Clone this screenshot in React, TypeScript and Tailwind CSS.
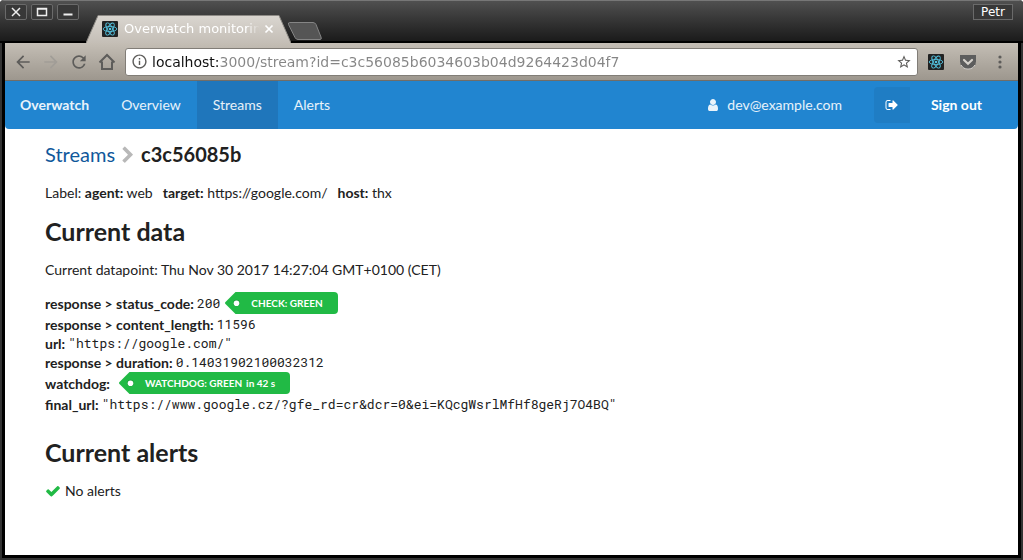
import React from "react"

const ICONS = {
  back: "M20 11H7.83l5.59-5.59L12 4l-8 8 8 8 1.41-1.41L7.83 13H20v-2z",
  forward: "M12 4l-1.41 1.41L16.17 11H4v2h12.17l-5.58 5.59L12 20l8-8z",
  reload:
    "M17.65 6.35A7.96 7.96 0 0 0 12 4c-4.42 0-8 3.58-8 8s3.58 8 8 8c3.73 0 6.84-2.55 7.73-6h-2.08A5.99 5.99 0 0 1 12 18c-3.31 0-6-2.69-6-6s2.69-6 6-6c1.66 0 3.14.69 4.22 1.78L13 11h7V4l-2.35 2.35z",
  info: "M11 17h2v-6h-2v6zm1-15C6.48 2 2 6.48 2 12s4.48 10 10 10 10-4.48 10-10S17.52 2 12 2zm0 18c-4.41 0-8-3.59-8-8s3.59-8 8-8 8 3.59 8 8-3.59 8-8 8zM11 9h2V7h-2v2z",
  star: "M22 9.24l-7.19-.62L12 2 9.19 8.63 2 9.24l5.46 4.73L5.82 21 12 17.27 18.18 21l-1.63-7.03L22 9.24zM12 15.4l-3.76 2.27 1-4.28-3.32-2.88 4.38-.38L12 6.1l1.71 4.04 4.38.38-3.32 2.88 1 4.28L12 15.4z",
}

const GLYPHS = {
  user: "M1536 1399q0 109-62.5 187t-150.5 78h-854q-88 0-150.5-78t-62.5-187q0-85 8.5-160.5t31.5-152 58.5-131 94-89 134.5-34.5q131 128 313 128t313-128q76 0 134.5 34.5t94 89 58.5 131 31.5 152 8.5 160.5zm-256-887q0 159-112.5 271.5t-271.5 112.5-271.5-112.5-112.5-271.5 112.5-271.5 271.5-112.5 271.5 112.5 112.5 271.5z",
  signOut:
    "M704 1440q0 4 1 20t.5 26.5-3 23.5-10 19.5-20.5 6.5h-320q-119 0-203.5-84.5t-84.5-203.5v-704q0-119 84.5-203.5t203.5-84.5h320q13 0 22.5 9.5t9.5 22.5q0 4 1 20t.5 26.5-3 23.5-10 19.5-20.5 6.5h-320q-66 0-113 47t-47 113v704q0 66 47 113t113 47h312l11.5 1 11.5 3 8 5.5 7 9 2 13.5zm928-544q0 26-19 45l-544 544q-19 19-45 19t-45-19-19-45v-288h-448q-26 0-45-19t-19-45v-384q0-26 19-45t45-19h448v-288q0-26 19-45t45-19 45 19l544 544q19 19 19 45z",
  check:
    "M1671 566q0 40-28 68l-724 724-136 136q-28 28-68 28t-68-28l-136-136-362-362q-28-28-28-68t28-68l136-136q28-28 68-28t68 28l294 295 656-657q28-28 68-28t68 28l136 136q28 28 28 68z",
  chevron:
    "M1363 1005l-742 742q-19 19-45 19t-45-19l-166-166q-19-19-19-45t19-45l531-531-531-531q-19-19-19-45t19-45l166-166q19-19 45-19t45 19l742 742q19 19 19 45t-19 45z",
}

const Icon = ({ name, className }: { name: keyof typeof ICONS; className: string }) => (
  <svg viewBox="0 0 24 24" className={className} fill="currentColor" aria-hidden="true">
    <path d={ICONS[name]} />
  </svg>
)

const Glyph = ({ name, className }: { name: keyof typeof GLYPHS; className: string }) => (
  <svg viewBox="0 0 1792 1792" className={className} fill="currentColor" aria-hidden="true">
    <path d={GLYPHS[name]} />
  </svg>
)

const ReactLogo = () => (
  <svg viewBox="0 0 16 16" className="size-4 shrink-0" aria-hidden="true">
    <rect width="16" height="16" rx="1" fill="#222" />
    <g fill="none" stroke="#53c1de" strokeWidth="0.9">
      <ellipse cx="8" cy="8" rx="6.8" ry="2.6" />
      <ellipse cx="8" cy="8" rx="6.8" ry="2.6" transform="rotate(60 8 8)" />
      <ellipse cx="8" cy="8" rx="6.8" ry="2.6" transform="rotate(120 8 8)" />
    </g>
    <circle cx="8" cy="8" r="1.3" fill="#53c1de" />
  </svg>
)

const WindowButton = ({ label, children }: { label: string; children: React.ReactNode }) => (
  <button
    aria-label={label}
    className="flex h-4 w-[22px] items-center justify-center rounded-xs border border-[#6a6a6a] bg-[#383838]"
  >
    <svg viewBox="0 0 12 12" className="size-3" fill="none" stroke="#eee" strokeWidth="1.5">
      {children}
    </svg>
  </button>
)

const TitleBar = () => (
  <div className="flex h-[43px] justify-between border-t border-b-2 border-t-[#777] border-b-black bg-linear-to-b from-[#505050] to-[#1b1b1b] pr-[10px] pl-[5px]">
    <div className="flex">
      <div className="mt-[3px] flex gap-1">
        <WindowButton label="Close">
          <path d="M2 2l8 8M10 2l-8 8" />
        </WindowButton>
        <WindowButton label="Maximize">
          <path d="M1.5 2.5h9v7h-9zM1.5 3h9" />
        </WindowButton>
        <WindowButton label="Minimize">
          <path d="M1.5 8.5h9" strokeWidth="2" />
        </WindowButton>
      </div>
      <div className="relative mt-[14px] ml-[7px] flex h-7 w-[205px] items-center pl-4">
        <svg viewBox="0 0 205 28" className="absolute inset-0 h-7 w-[205px]" aria-hidden="true">
          <defs>
            <linearGradient id="tab" x1="0" y1="0" x2="0" y2="1">
              <stop offset="0" stopColor="#dad6d0" />
              <stop offset="1" stopColor="#c4beb6" />
            </linearGradient>
          </defs>
          <path d="M0 28L12 0.5h181L205 28z" fill="url(#tab)" />
          <path d="M0 28L12 0.5h181L205 28" fill="none" stroke="#8e8b86" />
        </svg>
        <div className="relative flex items-center">
          <ReactLogo />
          <div className="ml-[6px] w-[136px] overflow-hidden mask-r-from-90% font-[DejaVu_Sans,sans-serif] text-[13px] leading-5 whitespace-nowrap text-white">
            Overwatch monitoring
          </div>
          <button aria-label="Close tab" className="ml-1 text-white">
            <svg viewBox="0 0 10 10" className="size-[10px]" stroke="currentColor" strokeWidth="1.7">
              <path d="M1.5 1.5l7 7M8.5 1.5l-7 7" />
            </svg>
          </button>
        </div>
      </div>
      <button aria-label="New tab" className="-ml-1 flex items-end">
        <svg viewBox="0 0 36 19" className="h-[19px] w-9">
          <path
            d="M2.5 0.5H26q2 0 3 2L34 15q1 2.500-1 2.500H11q-2 0-3-2L1.500 2.500q-.5-2 1-2z"
            fill="#555"
            stroke="#858585"
          />
        </svg>
      </button>
    </div>
    <button className="mt-[3px] h-4 w-10 border border-[#6a6a6a] bg-[#383838] font-[DejaVu_Sans,sans-serif] text-xs leading-[14px] text-white">
      Petr
    </button>
  </div>
)

const Toolbar = () => (
  <div className="flex h-[38px] items-center border-b border-b-[#716d67] bg-linear-to-b from-[#c4beb5] to-[#9d978e] px-[10px] pl-2 text-[#5d5c5a]">
    <div className="flex gap-2">
      <button aria-label="Back">
        <Icon name="back" className="size-5" />
      </button>
      <button aria-label="Forward" className="text-[#a19d97]">
        <Icon name="forward" className="size-5" />
      </button>
      <button aria-label="Reload">
        <Icon name="reload" className="size-5" />
      </button>
      <button aria-label="Home">
        <svg viewBox="0 0 20 20" className="size-5" fill="none" stroke="currentColor" strokeWidth="2">
          <path d="M2.500 10.500L10 3l7.500 7.500M5 9.500V17h10V9.500" />
        </svg>
      </button>
    </div>
    <div className="ml-2 flex h-7 flex-1 items-center rounded-[3px] border border-[#817d77] bg-white px-[5px]">
      <Icon name="info" className="size-[17px]" />
      <input
        aria-label="Address"
        defaultValue="localhost:3000/stream?id=c3c56085b6034603b04d9264423d04f7"
        className="ml-1 h-6 min-w-0 flex-1 bg-[linear-gradient(90deg,#111_67px,#858585_67px)] bg-clip-text font-[DejaVu_Sans,sans-serif] text-sm text-transparent outline-none"
      />
      <button aria-label="Bookmark">
        <Icon name="star" className="size-4" />
      </button>
    </div>
    <div className="ml-[10px] flex items-center gap-4">
      <ReactLogo />
      <svg viewBox="0 0 16 16" className="size-4" aria-hidden="true">
        <path d="M0 1h16v6.500a8 8 0 0 1-16 0z" fill="#5d5d5d" />
        <path d="M4 6l4 3.800L12 6" fill="none" stroke="#d6d2cc" strokeWidth="2.200" strokeLinecap="round" />
        <path d="M1 11a8 8 0 0 0 14 0" fill="none" stroke="#dedad4" />
      </svg>
      <button aria-label="Menu">
        <svg viewBox="0 0 16 16" className="size-4" fill="currentColor">
          <circle cx="8" cy="3" r="1.600" />
          <circle cx="8" cy="8" r="1.600" />
          <circle cx="8" cy="13" r="1.600" />
        </svg>
      </button>
    </div>
  </div>
)

const NavBar = () => (
  <nav className="flex h-12 items-center justify-between rounded-b-[4px] bg-[#2185d0] text-sm text-white/90">
    <div className="flex h-full">
      <a href="#home" className="flex items-center pr-4 pl-[15px] font-bold">
        Overwatch
      </a>
      <a href="#overview" className="flex items-center px-4">
        Overview
      </a>
      <a href="#streams" className="flex items-center bg-[#1f76bb] px-4">
        Streams
      </a>
      <a href="#alerts" className="flex items-center px-4">
        Alerts
      </a>
    </div>
    <div className="flex items-center">
      <Glyph name="user" className="mr-[7px] size-[14px]" />
      <span>dev@example.com</span>
      <button className="ml-8 flex items-center font-bold text-white">
        <span className="flex size-9 items-center justify-center rounded-l-[4px] bg-[#1f7dc4]">
          <Glyph name="signOut" className="size-[14px]" />
        </span>
        <span className="pr-9 pl-[21px]">Sign out</span>
      </button>
    </div>
  </nav>
)

const Tag = ({ children }: { children: React.ReactNode }) => (
  <span className="flex h-[22px] items-center text-[10px] font-bold text-white">
    <svg viewBox="0 0 18 22" className="h-[22px] w-[18px]" aria-hidden="true">
      <path d="M18 0h-7.500L.500 10q-1 1 0 2l10 10H18z" fill="#21ba45" />
      <circle cx="11.500" cy="11" r="3.300" fill="#1b9c3a" />
      <circle cx="11.500" cy="11.300" r="2.800" fill="#fff" />
    </svg>
    <span className="flex h-full items-center rounded-r-[4px] bg-[#21ba45] pr-[15px] pl-2">{children}</span>
  </span>
)

const Row = ({ label, value, children }: { label: string; value?: string; children?: React.ReactNode }) => (
  <div className="flex items-center">
    <dt className="leading-[19px] font-bold">{label}:</dt>
    <dd className="flex items-center">
      {value && (
        <code className="ml-[3px] font-[Roboto_Mono,Liberation_Mono,monospace] text-[13px] leading-[19px]">{value}</code>
      )}
      {children}
    </dd>
  </div>
)

const Content = () => (
  <main className="flex-1 px-10 pt-[11px] text-sm leading-5 text-[#212121]">
    <div className="flex items-center text-xl leading-7">
      <a href="#streams" className="text-[#10589b]">
        Streams
      </a>
      <Glyph name="chevron" className="mx-1 size-[18px] text-[#b8b8b8]" />
      <span className="font-bold">c3c56085b</span>
    </div>

    <p className="mt-[15px] flex flex-wrap gap-x-[10px]">
      <span>
        Label: <b>agent:</b> web
      </span>
      <span>
        <b>target:</b> https://google.com/
      </span>
      <span>
        <b>host:</b> thx
      </span>
    </p>

    <h2 className="mt-3 text-[25px] leading-8 font-bold">Current data</h2>
    <p className="mt-[13px]">Current datapoint: Thu Nov 30 2017 14:27:04 GMT+0100 (CET)</p>

    <dl className="mt-3">
      <Row label="response > status_code" value="200">
        <div className="ml-[5px] pb-px">
          <Tag>CHECK: GREEN</Tag>
        </div>
      </Row>
      <Row label="response > content_length" value="11596" />
      <Row label="url" value={'"https://google.com/"'} />
      <Row label="response > duration" value="0.14031902100032312" />
      <Row label="watchdog">
        <div className="ml-[9px] pb-px">
          <Tag>
            WATCHDOG: GREEN<span className="ml-1">in 42 s</span>
          </Tag>
        </div>
      </Row>
      <Row label="final_url" value={'"https://www.google.cz/?gfe_rd=cr&dcr=0&ei=KQcgWsrlMfHf8geRj7O4BQ"'} />
    </dl>

    <h2 className="mt-[22px] text-[25px] leading-8 font-bold">Current alerts</h2>
    <p className="mt-[13px] flex items-center">
      <Glyph name="check" className="mr-1 size-4 text-[#21ba45]" />
      No alerts
    </p>
  </main>
)

export default function App() {
  return (
    <div className="flex min-h-screen flex-col overflow-hidden rounded-t-[4px] bg-black font-[Lato,sans-serif]">
      <TitleBar />
      <div className="flex flex-1 flex-col border-x-2 border-b-2 border-[#333] px-[3px] pb-[3px]">
        <div className="flex flex-1 flex-col bg-white">
          <Toolbar />
          <NavBar />
          <Content />
        </div>
      </div>
    </div>
  )
}
